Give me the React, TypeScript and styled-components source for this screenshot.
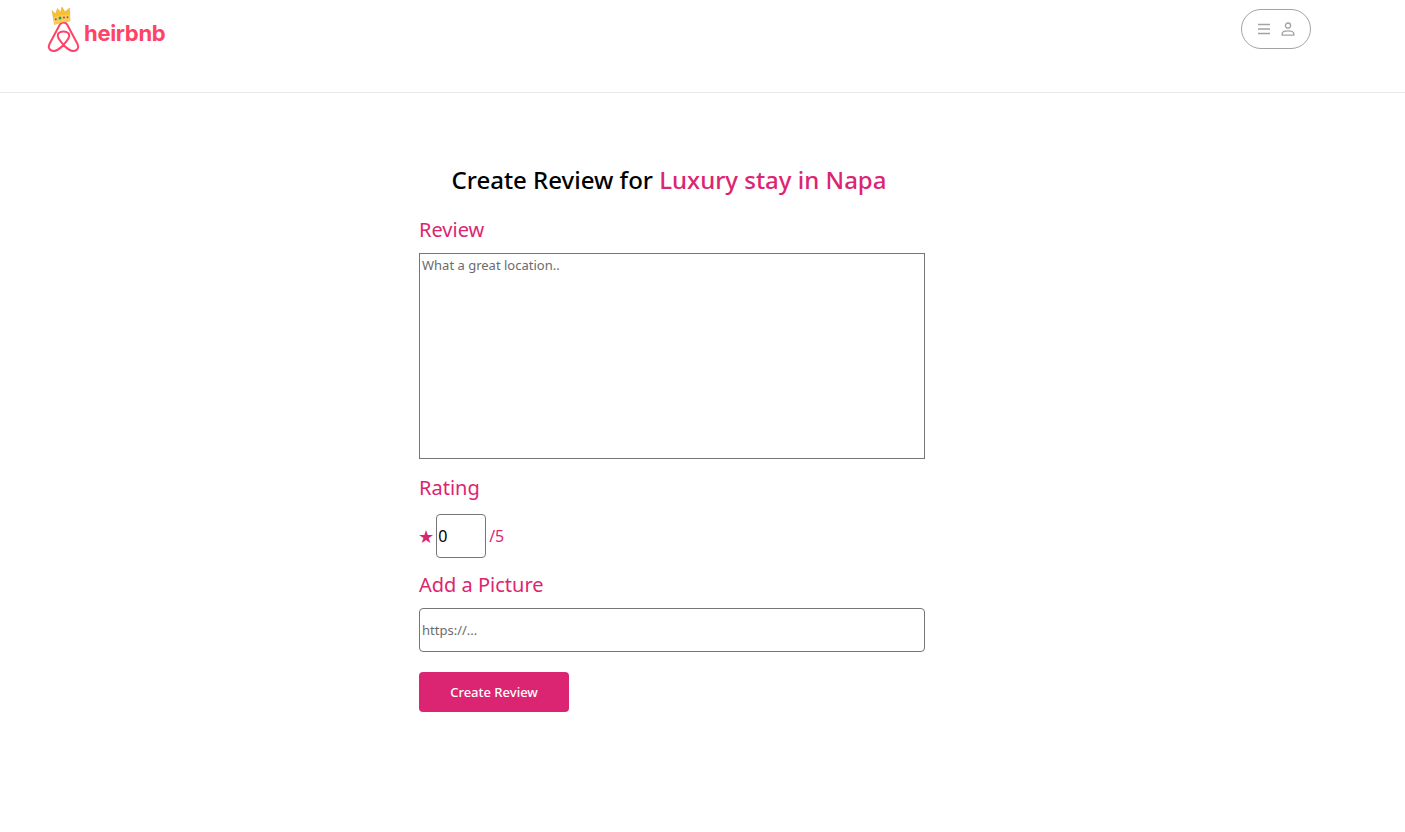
import React, { FunctionComponent } from 'react';
import styled, { createGlobalStyle } from 'styled-components';

const pink = '#dc2572';

const GlobalStyle = createGlobalStyle`
  html, body {
    margin: 0;
    padding: 0;
    background: #fff;
    font-family: "Noto Sans", sans-serif;
  }
`;

const Page = styled.div`
  width: 1405px;
  height: 832px;
  overflow: hidden;
`;

const Header = styled.header`
  height: 92px;
  border-bottom: 1px solid #e8e8e8;
  display: flex;
  justify-content: space-between;
  align-items: flex-start;
  padding: 0 94px 0 47px;
`;

const Logo = styled.div`
  display: flex;
  align-items: flex-start;
  padding-top: 7px;
`;

const LogoText = styled.span`
  font-family: Inter, sans-serif;
  font-weight: 700;
  font-size: 22px;
  line-height: 28px;
  letter-spacing: -0.3px;
  color: #ff4266;
  margin: 12px 0 0 4px;
`;

const MenuButton = styled.button`
  margin-top: 9px;
  width: 70px;
  height: 40px;
  border: 1px solid #a3a3a3;
  border-radius: 20px;
  background: #fff;
  padding: 0;
  display: flex;
  align-items: center;
  justify-content: center;
  gap: 11px;
`;

const Main = styled.main`
  width: 506px;
  margin-left: 419px;
  padding-top: 69px;
`;

const Title = styled.h1`
  margin: 0 0 18px;
  font-size: 24px;
  line-height: 36px;
  font-weight: 500;
  color: #000;
  text-align: center;
  padding-right: 6px;
`;

const Accent = styled.span`
  color: ${pink};
`;

const Label = styled.label`
  display: block;
  font-size: 20px;
  line-height: 28px;
  color: ${pink};
  margin-bottom: 9px;
`;

const ReviewArea = styled.textarea`
  display: block;
  box-sizing: border-box;
  width: 506px;
  height: 206px;
  margin: 0 0 15px;
  padding: 2px;
  border: 1px solid #767676;
  border-radius: 0;
  resize: none;
  font-family: "Noto Sans", sans-serif;
  font-size: 13px;
  &::placeholder { color: #6b6b6b; }
`;

const RatingRow = styled.div`
  display: flex;
  align-items: center;
  height: 44px;
  margin: 12px 0 13px;
  font-size: 16px;
  color: ${pink};
`;

const Star = styled.span`
  font-family: "DejaVu Sans", sans-serif;
  font-size: 18px;
  margin-right: 2px;
  margin-left: -1px;
`;

const RatingInput = styled.input`
  box-sizing: border-box;
  width: 50px;
  height: 44px;
  padding: 1px 2px 1px 1px;
  margin-right: 3px;
  border: 1px solid #767676;
  border-radius: 4px;
  font-family: "Noto Sans", sans-serif;
  font-size: 16px;
  color: #000;
`;

const UrlInput = styled.input`
  display: block;
  box-sizing: border-box;
  width: 506px;
  height: 44px;
  padding: 1px 2px;
  margin: 0 0 20px;
  border: 1px solid #767676;
  border-radius: 4px;
  font-family: "Noto Sans", sans-serif;
  font-size: 13px;
  &::placeholder { color: #6b6b6b; }
`;

const SubmitButton = styled.button`
  display: block;
  width: 150px;
  height: 40px;
  border: none;
  border-radius: 4px;
  background: ${pink};
  color: #fff;
  font-family: "Noto Sans", sans-serif;
  font-size: 13px;
  font-weight: 500;
`;

const LogoMark: FunctionComponent = () => (
  <svg width="33" height="45" viewBox="0 0 33 45" fill="none">
    <path
      d="M16.5 15.5 C14.5 15.5 13.4 16.5 12.6 18 L2.5 37 C0.8 40.5 2.5 44 6.6 44 C10.2 44 13.8 41 16.9 37.5 C20.6 33 23.2 30 22.1 27.5 C21 25 18.5 24.5 16.5 24.5 C14.5 24.5 12 25 10.9 27.5 C9.8 30 12.4 33 16.1 37.5 C19.2 41 22.8 44 26.4 44 C30.5 44 32.2 40.5 30.5 37 L20.4 18 C19.6 16.5 18.5 15.5 16.5 15.5Z"
      stroke="#ff4266"
      strokeWidth="2"
      strokeLinejoin="round"
    />
    <path d="M5 3.5 L8.5 7 L10.5 1.5 L13.5 5.5 L15 0 L18 5 L22.5 1 L23 14 Q14 14.5 7.5 17.5Z" fill="#f6c02f" stroke="#e8a328" strokeWidth="0.5" />
    <path d="M6.3 10.5 Q14 7.5 22.7 7.5 L23 14 Q14 14.5 7.5 17.5Z" fill="#f9cd5c" />
    <circle cx="8.8" cy="12.3" r="1" fill="#9b3bb5" />
    <circle cx="13" cy="11" r="1.5" fill="#3f9a45" />
    <circle cx="17" cy="10.4" r="1" fill="#9b3bb5" />
    <circle cx="20.5" cy="10.2" r="1" fill="#d8433f" />
  </svg>
);

const MenuIcon: FunctionComponent = () => (
  <svg width="12" height="12" viewBox="0 0 12 12" fill="none" stroke="#a3a3a3" strokeWidth="1.5">
    <path d="M0 1.5H12M0 6H12M0 10.5H12" />
  </svg>
);

const UserIcon: FunctionComponent = () => (
  <svg width="14" height="14" viewBox="0 0 14 14" fill="none" stroke="#a3a3a3" strokeWidth="1.3">
    <circle cx="7" cy="3.6" r="2.6" />
    <path d="M1.2 13.2V11.6C1.2 9.8 3.6 8.8 7 8.8S12.8 9.8 12.8 11.6V13.2Z" />
  </svg>
);

const App: FunctionComponent = () => (
  <Page>
    <GlobalStyle />
    <Header>
      <Logo>
        <LogoMark />
        <LogoText>heirbnb</LogoText>
      </Logo>
      <MenuButton aria-label="menu">
        <MenuIcon />
        <UserIcon />
      </MenuButton>
    </Header>
    <Main>
      <Title>
        Create Review for <Accent>Luxury stay in Napa</Accent>
      </Title>
      <Label>Review</Label>
      <ReviewArea placeholder="What a great location.." />
      <Label>Rating</Label>
      <RatingRow>
        <Star>★</Star>
        <RatingInput type="number" defaultValue={0} />
        <span>/5</span>
      </RatingRow>
      <Label>Add a Picture</Label>
      <UrlInput placeholder="https://..." />
      <SubmitButton>Create Review</SubmitButton>
    </Main>
  </Page>
);

export default App;
